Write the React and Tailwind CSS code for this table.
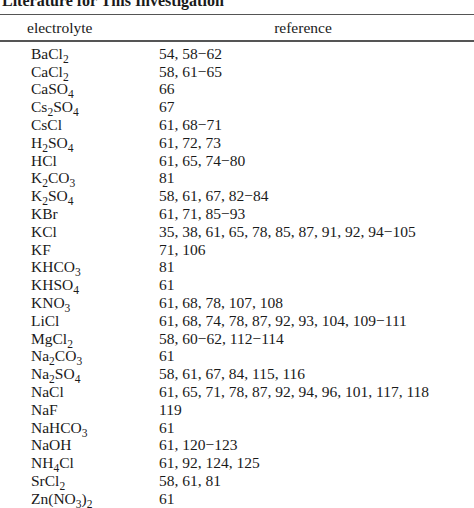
function S({ children }) {
  return <sub className="text-[11.5px] leading-none bottom-[-4px]">{children}</sub>
}

const rows = [
  [<>BaCl<S>2</S></>, '54, 58−62'],
  [<>CaCl<S>2</S></>, '58, 61−65'],
  [<>CaSO<S>4</S></>, '66'],
  [<>Cs<S>2</S>SO<S>4</S></>, '67'],
  [<>CsCl</>, '61, 68−71'],
  [<>H<S>2</S>SO<S>4</S></>, '61, 72, 73'],
  [<>HCl</>, '61, 65, 74−80'],
  [<>K<S>2</S>CO<S>3</S></>, '81'],
  [<>K<S>2</S>SO<S>4</S></>, '58, 61, 67, 82−84'],
  [<>KBr</>, '61, 71, 85−93'],
  [<>KCl</>, '35, 38, 61, 65, 78, 85, 87, 91, 92, 94−105'],
  [<>KF</>, '71, 106'],
  [<>KHCO<S>3</S></>, '81'],
  [<>KHSO<S>4</S></>, '61'],
  [<>KNO<S>3</S></>, '61, 68, 78, 107, 108'],
  [<>LiCl</>, '61, 68, 74, 78, 87, 92, 93, 104, 109−111'],
  [<>MgCl<S>2</S></>, '58, 60−62, 112−114'],
  [<>Na<S>2</S>CO<S>3</S></>, '61'],
  [<>Na<S>2</S>SO<S>4</S></>, '58, 61, 67, 84, 115, 116'],
  [<>NaCl</>, '61, 65, 71, 78, 87, 92, 94, 96, 101, 117, 118'],
  [<>NaF</>, '119'],
  [<>NaHCO<S>3</S></>, '61'],
  [<>NaOH</>, '61, 120−123'],
  [<>NH<S>4</S>Cl</>, '61, 92, 124, 125'],
  [<>SrCl<S>2</S></>, '58, 61, 81'],
  [<>Zn(NO<S>3</S>)<S>2</S></>, '61'],
]

export default function App() {
  return (
    <div className="w-[474px] h-[508px] overflow-hidden bg-white text-[#1a1a1a] font-['Liberation_Serif',serif]">
      <div className="-mt-[7px] h-[16px] pl-[2px] leading-[16px] text-[16px] font-bold whitespace-nowrap">
        Literature for This Investigation
      </div>
      <div className="mt-[5px] border-t-[1.5px] border-b-[2px] border-[#555] pt-[3.5px] pb-[4px] flex text-[15.5px] leading-[17.8px]">
        <div className="w-[159px] pl-[27px]">electrolyte</div>
        <div className="w-[288px] text-center">reference</div>
      </div>
      <div className="pt-[2.5px] text-[15.5px] leading-[17.8px]">
        {rows.map(([el, ref], i) => (
          <div key={i} className="flex whitespace-nowrap">
            <div className="w-[159px] pl-[31px]">{el}</div>
            <div>{ref}</div>
          </div>
        ))}
      </div>
    </div>
  )
}
